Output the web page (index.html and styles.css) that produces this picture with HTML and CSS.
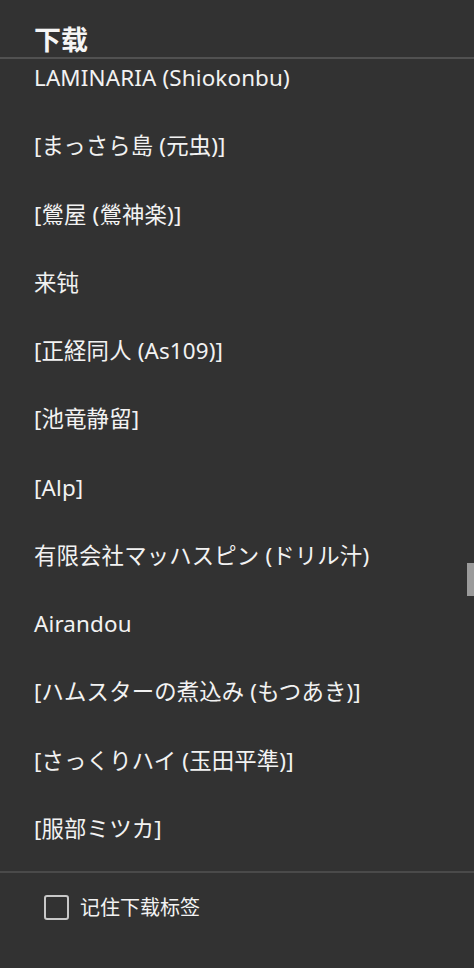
FILE: index.html
```html
<!DOCTYPE html>
<html lang="zh">
<head>
<meta charset="utf-8">
<link rel="stylesheet" href="styles.css">
</head>
<body>
<div class="dialog">
  <div class="header">下载</div>
  <div class="list-wrap">
    <ul class="list">
      <li>LAMINARIA (Shiokonbu)</li>
      <li>[まっさら島 (元虫)]</li>
      <li>[鶯屋 (鶯神楽)]</li>
      <li>来钝</li>
      <li>[正経同人 (As109)]</li>
      <li>[池竜静留]</li>
      <li>[Alp]</li>
      <li>有限会社マッハスピン (ドリル汁)</li>
      <li>Airandou</li>
      <li>[ハムスターの煮込み (もつあき)]</li>
      <li>[さっくりハイ (玉田平準)]</li>
      <li>[服部ミツカ]</li>
    </ul>
    <div class="scrollbar"></div>
  </div>
  <div class="footer">
    <span class="checkbox"></span>
    <span class="label">记住下载标签</span>
  </div>
</div>
</body>
</html>
```
FILE: styles.css
```css
html, body {
  margin: 0;
  padding: 0;
  background: #323232;
}
body {
  font-family: "Noto Sans", "Noto Sans CJK SC", sans-serif;
  color: #f2f2f2;
}
.dialog {
  width: 474px;
  height: 968px;
  display: flex;
  flex-direction: column;
  background: #323232;
}
.header {
  height: 59px;
  box-sizing: border-box;
  padding-left: 34px;
  padding-top: 22px;
  font-size: 27px;
  line-height: 36px;
  font-weight: bold;
  color: #f5f5f5;
  border-bottom: 2px solid #515151;
  flex: none;
}
.list-wrap {
  position: relative;
  height: 812px;
  overflow: hidden;
  flex: none;
  border-bottom: 2px solid #4a4a4a;
}
.list {
  list-style: none;
  margin: -15px 0 0 0;
  padding: 0;
}
.list li {
  height: 68.27px;
  line-height: 68.27px;
  padding-left: 34px;
  font-size: 22.4px;
  letter-spacing: 0.15px;
  white-space: nowrap;
}
.scrollbar {
  position: absolute;
  right: 0;
  top: 504px;
  width: 7px;
  height: 33px;
  background: #9b9b9b;
}
.footer {
  flex: 1;
  display: flex;
  align-items: center;
  padding-left: 44px;
  padding-bottom: 26px;
  gap: 11px;
}
.checkbox {
  width: 25px;
  height: 25px;
  box-sizing: border-box;
  border: 2.5px solid #c8c8c8;
  border-radius: 3px;
  flex: none;
}
.label {
  font-size: 20px;
  line-height: 30px;
  white-space: nowrap;
}
```
